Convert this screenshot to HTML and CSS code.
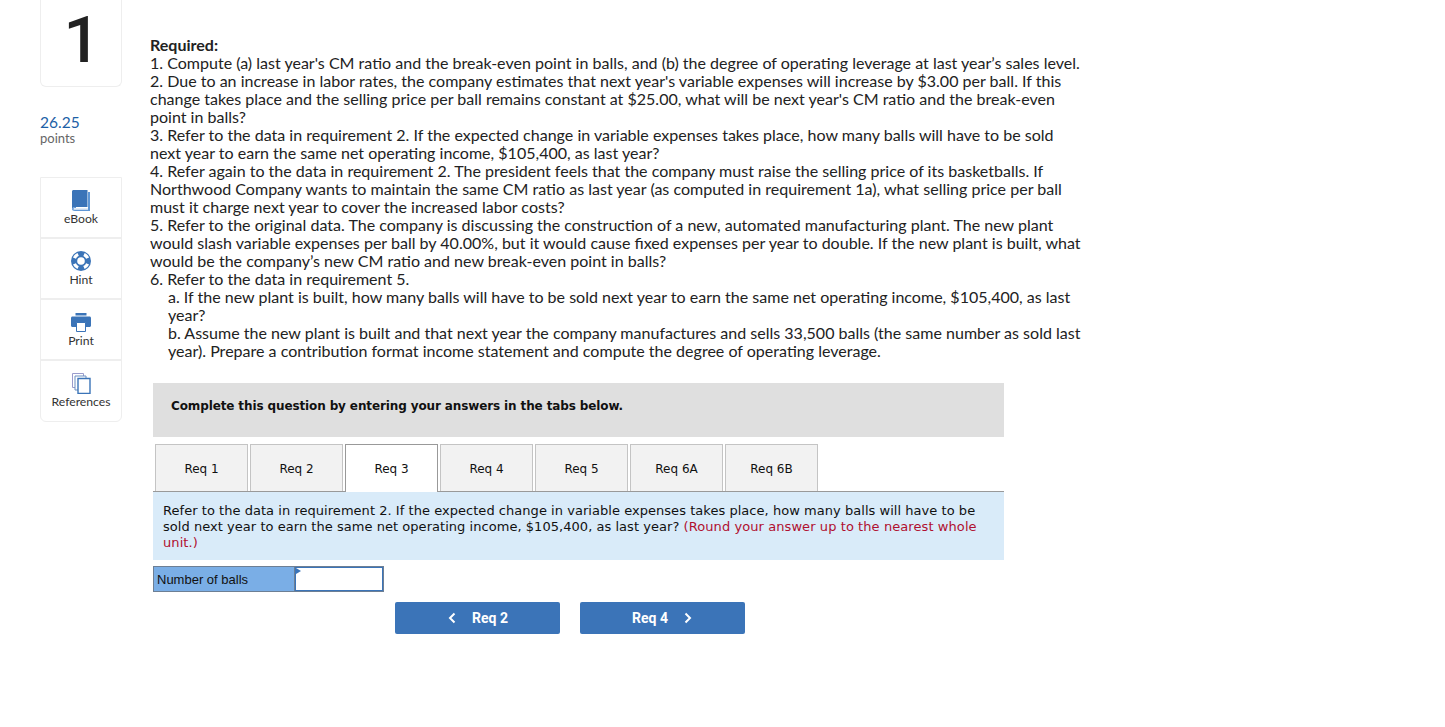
FILE: index.html
```html
<!DOCTYPE html>
<html>
  <head>
    <title>Question 1</title>
    <link rel="stylesheet" href="styles.css">
  </head>
  <body>
    <div class="page">
      <aside class="sidebar">
        <div class="number-card">1</div>
        <div class="points">
          <div class="points-value">26.25</div>
          <div class="points-label">points</div>
        </div>
        <div class="tools">
          <div class="tool">
            <svg class="tool-icon" width="22" height="22" viewBox="0 0 22 22">
              <path d="M2 2.500C2 1.500 2.800 1 3.500 1H17.500V18H5C3.500 18 2 19 2 20z" fill="#3b74b8"/>
              <path d="M18 3h2v19H5C3 22 2 21 2 20c0-1 1-2 3-2h1v1H5C4 19 3.500 19.500 3.500 20S4 21 5 21h13z" fill="#5f97d6"/>
              <path d="M4 19.500h14v1.500H4z" fill="#c6d8ee"/>
            </svg>
            <span>eBook</span>
          </div>
          <div class="tool">
            <svg class="tool-icon" width="22" height="22" viewBox="0 0 22 22">
              <circle cx="11" cy="11" r="10" fill="#3b74b8"/>
              <circle cx="11" cy="11" r="3.800" fill="#fff"/>
              <circle cx="11" cy="11" r="7.200" fill="none" stroke="#fff" stroke-width="3.200" stroke-dasharray="5.300 6" stroke-dashoffset="-2.900"/>
            </svg>
            <span>Hint</span>
          </div>
          <div class="tool">
            <svg class="tool-icon" width="22" height="22" viewBox="0 0 22 22">
              <path d="M5.500 2h11v2.500h-11z" fill="#3b74b8"/>
              <path d="M1 7c0-.8.600-1.500 1.500-1.500h17c.9 0 1.500.7 1.500 1.500v7.500c0 .8-.6 1.500-1.500 1.500H16V12H6v4H2.500C1.600 16 1 15.300 1 14.500z" fill="#3b74b8"/>
              <path d="M6.500 11.500h9v9h-9z" fill="#fff" stroke="#3b74b8"/>
            </svg>
            <span>Print</span>
          </div>
          <div class="tool">
            <svg class="tool-icon" width="22" height="22" viewBox="0 0 22 22">
              <path d="M2.500 1.500h11v14h-11z" fill="#fff" stroke="#9a9ccc"/>
              <path d="M5 4h11v14H5z" fill="#fff" stroke="#6d8fc0"/>
              <path d="M8 6.500h12v15H8z" fill="#fff" stroke="#3b74b8" stroke-width="1.400"/>
            </svg>
            <span>References</span>
          </div>
        </div>
      </aside>

      <main class="content">
        <div class="question">
          <strong>Required:</strong><br>
          1. Compute (a) last year's CM ratio and the break-even point in balls, and (b) the degree of operating leverage at last year’s sales level.<br>
          2. Due to an increase in labor rates, the company estimates that next year's variable expenses will increase by $3.00 per ball. If this<br>
          change takes place and the selling price per ball remains constant at $25.00, what will be next year's CM ratio and the break-even<br>
          point in balls?<br>
          3. Refer to the data in requirement 2. If the expected change in variable expenses takes place, how many balls will have to be sold<br>
          next year to earn the same net operating income, $105,400, as last year?<br>
          4. Refer again to the data in requirement 2. The president feels that the company must raise the selling price of its basketballs. If<br>
          Northwood Company wants to maintain the same CM ratio as last year (as computed in requirement 1a), what selling price per ball<br>
          must it charge next year to cover the increased labor costs?<br>
          5. Refer to the original data. The company is discussing the construction of a new, automated manufacturing plant. The new plant<br>
          would slash variable expenses per ball by 40.00%, but it would cause fixed expenses per year to double. If the new plant is built, what<br>
          would be the company’s new CM ratio and new break-even point in balls?<br>
          6. Refer to the data in requirement 5.
          <div class="sub-items">
            a. If the new plant is built, how many balls will have to be sold next year to earn the same net operating income, $105,400, as last<br>
            year?<br>
            b. Assume the new plant is built and that next year the company manufactures and sells 33,500 balls (the same number as sold last<br>
            year). Prepare a contribution format income statement and compute the degree of operating leverage.
          </div>
        </div>

        <div class="answer-area">
          <div class="instruction">Complete this question by entering your answers in the tabs below.</div>

          <div class="tabs">
            <div class="tab">Req 1</div>
            <div class="tab">Req 2</div>
            <div class="tab active">Req 3</div>
            <div class="tab">Req 4</div>
            <div class="tab">Req 5</div>
            <div class="tab">Req 6A</div>
            <div class="tab">Req 6B</div>
          </div>

          <div class="tab-text">
            Refer to the data in requirement 2. If the expected change in variable expenses takes place, how many balls will have to be<br>
            sold next year to earn the same net operating income, $105,400, as last year? <span class="hint-text">(Round your answer up to the nearest whole<br>
            unit.)</span>
          </div>

          <div class="answer-row">
            <div class="answer-label">Number of balls</div>
            <div class="answer-input"><span class="input-mark"></span></div>
          </div>

          <div class="nav-buttons">
            <button class="nav-button">
              <svg width="10" height="12" viewBox="0 0 10 12"><path d="M7.500 1.500 3 6l4.500 4.500" fill="none" stroke="#fff" stroke-width="2"/></svg>
              Req 2
            </button>
            <button class="nav-button">
              Req 4
              <svg width="10" height="12" viewBox="0 0 10 12"><path d="M2.500 1.500 7 6l-4.500 4.500" fill="none" stroke="#fff" stroke-width="2"/></svg>
            </button>
          </div>
        </div>
      </main>
    </div>
  </body>
</html>
```

FILE: styles.css
```css
body {
  margin: 0;
  background-color: #fff;
  font-family: Lato, sans-serif;
  color: #222;
}

.page {
  display: flex;
  align-items: flex-start;
  padding-left: 40px;
}

/* Left column */
.sidebar {
  width: 82px;
  flex-shrink: 0;
}

.number-card {
  box-sizing: border-box;
  height: 87px;
  padding-left: 2px;
  border: 1px solid #eee;
  border-top: none;
  border-radius: 0 0 6px 6px;
  text-align: center;
  font-family: Roboto, sans-serif;
  font-size: 65px;
  font-weight: 500;
  line-height: 81px;
  color: #222;
}

.points {
  margin-top: 27px;
  height: 63px;
}

.points-value {
  font-size: 15.5px;
  line-height: 17px;
  color: #1d5fa6;
}

.points-label {
  font-size: 13px;
  line-height: 15px;
  color: #666;
}

.tools {
  border: 1px solid #eee;
  border-radius: 0 0 6px 6px;
}

.tool {
  box-sizing: border-box;
  height: 61px;
  display: flex;
  flex-direction: column;
  align-items: center;
  padding-top: 11px;
  border-bottom: 2px solid #eee;
  font-size: 12.2px;
  line-height: 14px;
  color: #333;
}

.tool:last-child {
  border-bottom: none;
  height: 60px;
}

.tool-icon {
  display: block;
  margin-bottom: 1px;
}

/* Question text */
.content {
  margin-left: 28px;
  padding-top: 36px;
}

.question {
  width: 950px;
  font-size: 16.05px;
  line-height: 18px;
  color: #222;
  white-space: nowrap;
}

.question strong {
  font-weight: 700;
}

.sub-items {
  padding-left: 18px;
}

/* Answer block */
.answer-area {
  width: 851px;
  margin-top: 23px;
  margin-left: 3px;
}

.instruction {
  height: 54px;
  box-sizing: border-box;
  padding: 15px 18px;
  background-color: #dfdfdf;
  font-family: "DejaVu Sans", sans-serif;
  font-size: 12px;
  letter-spacing: -0.12px;
  line-height: 17px;
  font-weight: 700;
  color: #111;
}

.tabs {
  display: flex;
  gap: 2px;
  margin-top: 7px;
  padding-left: 2px;
  border-bottom: 1px solid #999;
  height: 47px;
}

.tab {
  box-sizing: border-box;
  width: 93px;
  height: 47px;
  border: 1px solid #c4c4c4;
  border-bottom: none;
  background-color: #f2f2f2;
  text-align: center;
  font-family: "DejaVu Sans", sans-serif;
  font-size: 12px;
  line-height: 48px;
  color: #111;
}

.tab.active {
  height: 48px;
  background-color: #fff;
  border-color: #999;
}

.tab-text {
  box-sizing: border-box;
  height: 68px;
  padding: 11px 10px 0;
  background-color: #d9ebf9;
  font-family: "DejaVu Sans", sans-serif;
  font-size: 13px;
  letter-spacing: 0.04px;
  line-height: 16px;
  color: #111;
  white-space: nowrap;
}

.hint-text {
  color: #b01030;
  letter-spacing: 0.08px;
}

.answer-row {
  display: flex;
  width: 231px;
  height: 26px;
  margin-top: 6px;
  border: 1px solid #6d7f94;
  box-sizing: border-box;
}

.answer-label {
  box-sizing: border-box;
  width: 141px;
  padding-left: 3px;
  background-color: #7aaee6;
  border-right: 1px solid #6d7f94;
  font-family: "Liberation Sans", sans-serif;
  font-size: 13px;
  line-height: 25px;
  color: #111;
}

.answer-input {
  flex: 1;
  position: relative;
  border: 1px solid #3b74b8;
  background-color: #fff;
}

.input-mark {
  position: absolute;
  top: 0;
  left: 0;
  border-left: 5px solid #3b74b8;
  border-top: 3px solid transparent;
  border-bottom: 3px solid transparent;
}

.nav-buttons {
  display: flex;
  gap: 20px;
  margin-top: 10px;
  margin-left: 242px;
}

.nav-button {
  width: 165px;
  height: 32px;
  display: flex;
  align-items: center;
  justify-content: center;
  gap: 15px;
  padding: 0;
  background-color: #3b74b8;
  color: #fff;
  border: none;
  border-radius: 2px;
  font-family: Roboto, sans-serif;
  font-size: 14px;
  font-weight: 700;
  cursor: pointer;
}
```
